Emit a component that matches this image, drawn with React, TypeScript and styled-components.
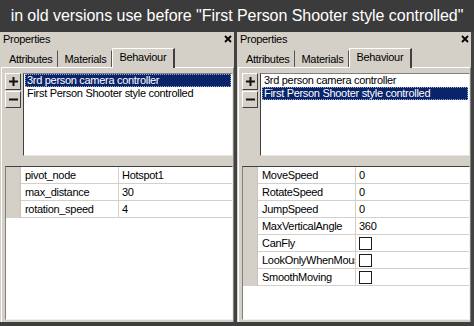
import React from "react";
import styled, { createGlobalStyle } from "styled-components";

const Global = createGlobalStyle`
  html, body { margin: 0; padding: 0; background: #d4d0c8; }
  body { width: 474px; height: 326px; overflow: hidden; }
  * { box-sizing: border-box; }
`;

const Page = styled.div`
  width: 474px;
  height: 326px;
  display: flex;
  flex-direction: column;
  font-family: "Liberation Sans", Arial, sans-serif;
  font-size: 11px;
  letter-spacing: -0.3px;
  color: #000;
`;

const Banner = styled.div`
  height: 32px;
  flex: none;
  background: #3b3b3b;
  color: #fff;
  font-size: 16px;
  letter-spacing: -0.05px;
  display: flex;
  align-items: center;
  justify-content: center;
  padding-bottom: 1px;
`;

const PanelsRow = styled.div`
  flex: 1;
  display: flex;
`;

const Panel = styled.section`
  width: 237px;
  display: flex;
  flex-direction: column;
  background: #d4d0c8;
  border-right: 3px solid #424242;
  border-bottom: 4px solid #3e3e3e;
`;

const Header = styled.div`
  height: 14px;
  flex: none;
  display: flex;
  align-items: center;
  justify-content: space-between;
  padding: 0 2px 0 3px;
`;

const CloseIcon = () => (
  <svg width="8" height="8" viewBox="0 0 8 8">
    <path d="M1 1 L7 7 M7 1 L1 7" stroke="#000" strokeWidth="1.8" />
  </svg>
);

const TabStrip = styled.div`
  height: 21px;
  flex: none;
  display: flex;
  align-items: flex-end;
  padding-left: 3px;
`;

const Tab = styled.div<{ $active?: boolean }>`
  height: ${(p) => (p.$active ? 20 : 17)}px;
  padding: 0 ${(p) => (p.$active ? 7 : 5)}px ${(p) => (p.$active ? 3 : 0)}px
    ${(p) => (p.$active ? 6 : 5)}px;
  display: flex;
  align-items: center;
  border-left: 1px solid ${(p) => (p.$active ? "#ffffff" : "transparent")};
  border-top: 1px solid ${(p) => (p.$active ? "#ffffff" : "transparent")};
  border-right: ${(p) => (p.$active ? "2px solid #404040" : "1px solid #555")};
  margin-bottom: ${(p) => (p.$active ? -1 : 0)}px;
  background: #d4d0c8;
  position: relative;
  z-index: ${(p) => (p.$active ? 1 : 0)};
`;

const Body = styled.div`
  flex: 1;
  display: flex;
  flex-direction: column;
  border-top: 1px solid #ffffff;
  border-left: 1px solid #ffffff;
  border-right: 1px solid #808080;
  margin-left: 1px;
  padding: 5px 0 2px 3px;
`;

const ListSection = styled.div`
  height: 83px;
  flex: none;
  display: flex;
  gap: 2px;
`;

const ButtonColumn = styled.div`
  display: flex;
  flex-direction: column;
  gap: 1px;
`;

const IconButton = styled.div`
  width: 16px;
  height: 17px;
  display: flex;
  align-items: center;
  justify-content: center;
  background: #d4d0c8;
  border-top: 1px solid #ffffff;
  border-left: 1px solid #ffffff;
  border-right: 1px solid #404040;
  border-bottom: 1px solid #404040;
`;

const PlusIcon = () => (
  <svg width="9" height="9" viewBox="0 0 9 9">
    <path d="M0 3.5 H9 V5.5 H0 Z M3.5 0 H5.5 V9 H3.5 Z" fill="#111" />
  </svg>
);

const MinusIcon = () => (
  <svg width="9" height="9" viewBox="0 0 9 9">
    <path d="M0 3.5 H9 V5.5 H0 Z" fill="#111" />
  </svg>
);

const ListBox = styled.div`
  flex: 1;
  background: #fff;
  border-top: 1px solid #808080;
  border-left: 1px solid #404040;
  border-right: 1px solid #e8e6e0;
  border-bottom: 1px solid #e8e6e0;
  padding: 0 1px;
`;

const ListItem = styled.div<{ $selected?: boolean }>`
  height: 13px;
  line-height: 13px;
  padding-left: 2px;
  white-space: nowrap;
  background: ${(p) => (p.$selected ? "#0a246a" : "transparent")};
  color: ${(p) => (p.$selected ? "#fff" : "#000")};
  outline: ${(p) => (p.$selected ? "1px dotted #9aa8d8" : "none")};
  outline-offset: -1px;
`;

const Splitter = styled.div`
  height: 10px;
  flex: none;
`;

const Grid = styled.div`
  flex: 1;
  background: #fff;
  border-top: 1px solid #404040;
  border-left: 1px solid #808080;
  border-right: 1px solid #f0f0f0;
  border-bottom: 1px solid #f0f0f0;
  display: grid;
  grid-template-columns: 15px 98px 1fr;
  grid-auto-rows: 17px;
  align-content: start;
`;

const Gutter = styled.div`
  background: #d4d0c8;
  border-right: 1px solid #c8c4bc;
`;

const Cell = styled.div<{ $name?: boolean }>`
  border-bottom: 1px solid #d4d0c8;
  border-right: ${(p) => (p.$name ? "1px solid #d4d0c8" : "none")};
  padding-left: ${(p) => (p.$name ? 4 : 3)}px;
  display: flex;
  align-items: center;
  white-space: nowrap;
  overflow: hidden;
`;

const CheckBox = styled.span`
  width: 13px;
  height: 13px;
  border: 1px solid #1c1c1c;
  background: #fff;
  display: inline-block;
`;

type Row = { name: string; value: string | boolean };

const PropertyGrid = ({ rows }: { rows: Row[] }) => (
  <Grid>
    {rows.map((r) => (
      <React.Fragment key={r.name}>
        <Gutter />
        <Cell $name>{r.name}</Cell>
        <Cell>{typeof r.value === "boolean" ? <CheckBox /> : r.value}</Cell>
      </React.Fragment>
    ))}
  </Grid>
);

const items = ["3rd person camera controller", "First Person Shooter style controlled"];

const PropertiesPanel = ({ selected, rows }: { selected: number; rows: Row[] }) => (
  <Panel>
    <Header>
      <span>Properties</span>
      <CloseIcon />
    </Header>
    <TabStrip>
      <Tab>Attributes</Tab>
      <Tab>Materials</Tab>
      <Tab $active>Behaviour</Tab>
    </TabStrip>
    <Body>
      <ListSection>
        <ButtonColumn>
          <IconButton>
            <PlusIcon />
          </IconButton>
          <IconButton>
            <MinusIcon />
          </IconButton>
        </ButtonColumn>
        <ListBox>
          {items.map((it, i) => (
            <ListItem key={it} $selected={i === selected}>
              {it}
            </ListItem>
          ))}
        </ListBox>
      </ListSection>
      <Splitter />
      <PropertyGrid rows={rows} />
    </Body>
  </Panel>
);

export default function App() {
  return (
    <Page>
      <Global />
      <Banner>in old versions use before "First Person Shooter style controlled"</Banner>
      <PanelsRow>
        <PropertiesPanel
          selected={0}
          rows={[
            { name: "pivot_node", value: "Hotspot1" },
            { name: "max_distance", value: "30" },
            { name: "rotation_speed", value: "4" },
          ]}
        />
        <PropertiesPanel
          selected={1}
          rows={[
            { name: "MoveSpeed", value: "0" },
            { name: "RotateSpeed", value: "0" },
            { name: "JumpSpeed", value: "0" },
            { name: "MaxVerticalAngle", value: "360" },
            { name: "CanFly", value: false },
            { name: "LookOnlyWhenMouseDown", value: false },
            { name: "SmoothMoving", value: false },
          ]}
        />
      </PanelsRow>
    </Page>
  );
}
